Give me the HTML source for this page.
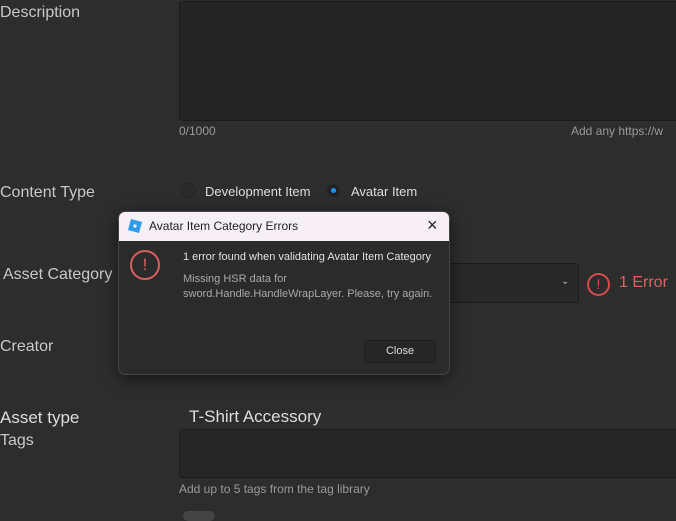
<html><head><style>
body{margin:0;width:676px;height:515px;background:#2d2d2d;font-family:"Liberation Sans",sans-serif;position:relative;overflow:hidden;color:#cfcfcf}
.a{position:absolute;white-space:nowrap}
.lbl{font-size:16px;color:#c8c8c8}
.box{position:absolute;background:#252525;border:1px solid #1c1c1c;border-radius:3px}
</style></head><body>
<div class="a lbl" style="left:0;top:4px">Description</div>
<div class="box" style="left:179px;top:1px;width:510px;height:118px"></div>
<div class="a" style="left:179px;top:124px;font-size:12px;color:#9a9a9a">0/1000</div>
<div class="a" style="left:571px;top:124px;font-size:12px;color:#9a9a9a">Add any https://w</div>
<div class="a lbl" style="left:0;top:184px">Content Type</div>
<div class="a" style="left:181px;top:183px;width:13px;height:13px;border-radius:50%;border:1px solid #222;background:#2a2a2a"></div>
<div class="a" style="left:205px;top:184px;font-size:13px;color:#ddd">Development Item</div>
<div class="a" style="left:327px;top:184px;width:11px;height:11px;border-radius:50%;background:#222;border:1px solid #222"></div>
<div class="a" style="left:331px;top:188px;width:5px;height:5px;border-radius:50%;background:#1e90ff"></div>
<div class="a" style="left:351px;top:184px;font-size:13px;color:#ddd">Avatar Item</div>
<div class="a lbl" style="left:3px;top:266px">Asset Category</div>
<div class="box" style="left:440px;top:263px;width:137px;height:38px;background:#282828"></div>
<div class="a" style="left:561px;top:276px;font-size:10px;color:#bbb">&#8964;</div>
<div class="a" style="left:587px;top:273px;width:19px;height:19px;border:2px solid #d94a4a;border-radius:50%;color:#d94a4a;font-size:14px;text-align:center;line-height:19px">!</div>
<div class="a" style="left:619px;top:274px;font-size:16px;color:#e06060">1 Error</div>
<div class="a lbl" style="left:0;top:338px">Creator</div>
<div class="a" style="left:0;top:408px;font-size:17px;color:#ddd">Asset type</div>
<div class="a" style="left:189px;top:407px;font-size:17px;color:#ddd">T-Shirt Accessory</div>
<div class="a lbl" style="left:0;top:432px">Tags</div>
<div class="box" style="left:179px;top:429px;width:510px;height:47px;background:#262626"></div>
<div class="a" style="left:179px;top:482px;font-size:12px;color:#9a9a9a">Add up to 5 tags from the tag library</div>
<div class="a" style="left:183px;top:511px;width:32px;height:10px;border-radius:6px;background:#444"></div>

<div class="a" style="left:118px;top:211px;width:330px;height:162px;background:#2b2b2b;border:1px solid #444;border-radius:7px;overflow:hidden;box-shadow:0 4px 16px rgba(0,0,0,.5)">
 <div style="height:29px;background:#f6eff6;position:relative">
  <svg class="a" style="left:9px;top:7px" width="14" height="14" viewBox="0 0 14 14"><path d="M3 0L14 3 11 14 0 11Z" fill="#2d9cef"/><rect x="5.5" y="5.5" width="3" height="3" fill="#f6eff6" transform="rotate(15 7 7)"/></svg>
  <div class="a" style="left:30px;top:7px;font-size:12px;color:#222">Avatar Item Category Errors</div>
  <div class="a" style="left:308px;top:3px;font-size:18px;color:#222">×</div>
 </div>
 <div class="a" style="left:11px;top:38px;width:26px;height:26px;border:2px solid #d86060;border-radius:50%;color:#d86060;font-size:17px;text-align:center;line-height:26px">!</div>
 <div class="a" style="left:64px;top:39px;font-size:11px;color:#e0e0e0">1 error found when validating Avatar Item Category</div>
 <div class="a" style="left:64px;top:60px;font-size:11px;color:#a8a8a8;line-height:15px">Missing HSR data for<br>sword.Handle.HandleWrapLayer. Please, try again.</div>
 <div class="a" style="left:245px;top:128px;width:70px;height:21px;border:1px solid #1c1c1c;background:#262626;border-radius:3px;font-size:11px;color:#ddd;text-align:center;line-height:21px">Close</div>
</div>
</body></html>
